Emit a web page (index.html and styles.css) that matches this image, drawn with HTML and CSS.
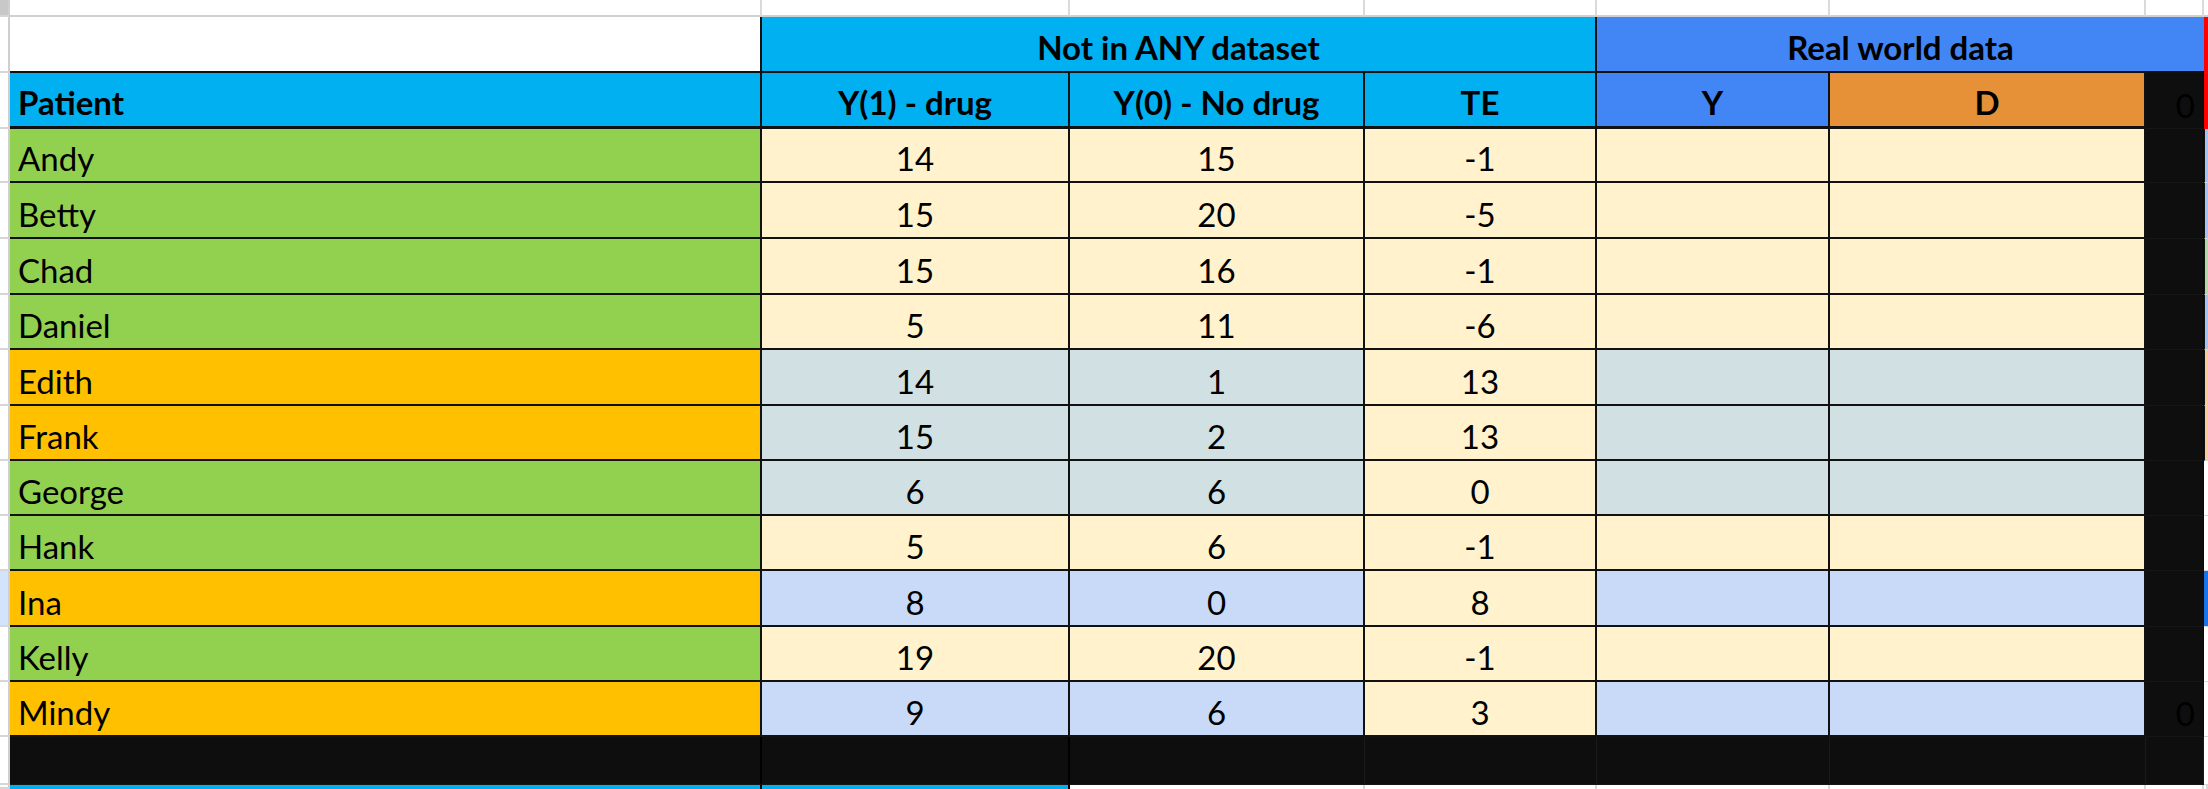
FILE: index.html
```html
<!DOCTYPE html>
<html>
<head>
<meta charset="utf-8">
<link rel="stylesheet" href="styles.css">
</head>
<body>
<div class="sheet">
  <!-- top partial row -->
  <div class="gut gut-top"></div>
  <div class="top"></div><div class="top"></div><div class="top"></div><div class="top"></div>
  <div class="top"></div><div class="top"></div><div class="top"></div><div class="top strip-top"></div>

  <!-- header row 1 -->
  <div class="gut"></div>
  <div class="cell blank"></div>
  <div class="cell head cyan span3">Not in ANY dataset</div>
  <div class="cell head blue span3 last">Real world data</div>
  <div class="strip red"></div>

  <!-- header row 2 -->
  <div class="gut"></div>
  <div class="cell head cyan left h2">Patient</div>
  <div class="cell head cyan h2">Y(1) - drug</div>
  <div class="cell head cyan h2">Y(0) - No drug</div>
  <div class="cell head cyan h2">TE</div>
  <div class="cell head blue h2">Y</div>
  <div class="cell head orange h2">D</div>
  <div class="cell dark num-r h2">0</div>
  <div class="strip red"></div>

  <!-- data -->
  <div class="gut"></div>
  <div class="cell name green">Andy</div>
  <div class="cell cream">14</div><div class="cell cream">15</div><div class="cell cream">-1</div>
  <div class="cell cream"></div><div class="cell cream"></div><div class="cell dark"></div>
  <div class="strip s-blue"></div>

  <div class="gut"></div>
  <div class="cell name green">Betty</div>
  <div class="cell cream">15</div><div class="cell cream">20</div><div class="cell cream">-5</div>
  <div class="cell cream"></div><div class="cell cream"></div><div class="cell dark"></div>
  <div class="strip s-blue"></div>

  <div class="gut"></div>
  <div class="cell name green">Chad</div>
  <div class="cell cream">15</div><div class="cell cream">16</div><div class="cell cream">-1</div>
  <div class="cell cream"></div><div class="cell cream"></div><div class="cell dark"></div>
  <div class="strip s-green"></div>

  <div class="gut"></div>
  <div class="cell name green">Daniel</div>
  <div class="cell cream">5</div><div class="cell cream">11</div><div class="cell cream">-6</div>
  <div class="cell cream"></div><div class="cell cream"></div><div class="cell dark"></div>
  <div class="strip s-blue"></div>

  <div class="gut"></div>
  <div class="cell name amber">Edith</div>
  <div class="cell slate">14</div><div class="cell slate">1</div><div class="cell cream">13</div>
  <div class="cell slate"></div><div class="cell slate"></div><div class="cell dark"></div>
  <div class="strip s-orange"></div>

  <div class="gut"></div>
  <div class="cell name amber">Frank</div>
  <div class="cell slate">15</div><div class="cell slate">2</div><div class="cell cream">13</div>
  <div class="cell slate"></div><div class="cell slate"></div><div class="cell dark"></div>
  <div class="strip s-orange"></div>

  <div class="gut"></div>
  <div class="cell name green">George</div>
  <div class="cell slate">6</div><div class="cell slate">6</div><div class="cell cream">0</div>
  <div class="cell slate"></div><div class="cell slate"></div><div class="cell dark"></div>
  <div class="strip s-white"></div>

  <div class="gut"></div>
  <div class="cell name green">Hank</div>
  <div class="cell cream">5</div><div class="cell cream">6</div><div class="cell cream">-1</div>
  <div class="cell cream"></div><div class="cell cream"></div><div class="cell dark"></div>
  <div class="strip s-white"></div>

  <div class="gut gut-sel"></div>
  <div class="cell name amber">Ina</div>
  <div class="cell lblue">8</div><div class="cell lblue">0</div><div class="cell cream">8</div>
  <div class="cell lblue"></div><div class="cell lblue"></div><div class="cell dark"></div>
  <div class="strip s-bright"></div>

  <div class="gut"></div>
  <div class="cell name green">Kelly</div>
  <div class="cell cream">19</div><div class="cell cream">20</div><div class="cell cream">-1</div>
  <div class="cell cream"></div><div class="cell cream"></div><div class="cell dark"></div>
  <div class="strip s-white"></div>

  <div class="gut"></div>
  <div class="cell name amber">Mindy</div>
  <div class="cell lblue">9</div><div class="cell lblue">6</div><div class="cell cream">3</div>
  <div class="cell lblue"></div><div class="cell lblue"></div><div class="cell dark num-r">0</div>
  <div class="strip s-white"></div>

  <!-- black row -->
  <div class="gut"></div>
  <div class="cell blackrow hard"></div>
  <div class="cell blackrow hard"></div>
  <div class="cell blackrow"></div>
  <div class="cell blackrow"></div>
  <div class="cell blackrow"></div>
  <div class="cell blackrow"></div>
  <div class="cell blackrow"></div>
  <div class="strip s-white"></div>

  <!-- bottom sliver -->
  <div class="gut"></div>
  <div class="bot cyan"></div>
  <div class="bot cyan"></div>
  <div class="bot"></div><div class="bot"></div><div class="bot"></div><div class="bot"></div><div class="bot"></div><div class="bot"></div>
</div>
</body>
</html>
```

FILE: styles.css
```css
html, body {
  margin: 0;
  padding: 0;
  background: #ffffff;
}

.sheet {
  display: grid;
  grid-template-columns: 10px 752px 308px 295px 232px 233px 316px 58px 4px;
  grid-template-rows: 17px 56px 56px 54px 56px 56px 55px 56px 55px 55px 55px 56px 55px 55px 48px 4px;
  width: 2208px;
  height: 789px;
  overflow: hidden;
  font-family: "Lato", "Liberation Sans", sans-serif;
  font-size: 33px;
  color: #000;
}

.sheet > div {
  box-sizing: border-box;
  min-width: 0;
  overflow: hidden;
}

.gut {
  background: #ffffff;
  border-right: 2px solid #cfcfcf;
  border-bottom: 2px solid #d6d6d6;
}
.gut-top { background: #c8c8c8; }
.gut-sel { background: #d3e3fd; }

.top {
  background: #ffffff;
  border-right: 2px solid #dadada;
  border-bottom: 2px solid #d0d0d0;
}

.cell {
  display: flex;
  align-items: flex-end;
  justify-content: center;
  line-height: 1;
  padding: 0 10px 6px 10px;
  border-right: 2px solid #111;
  border-bottom: 2px solid #111;
  white-space: nowrap;
}

.blank { background: #ffffff; }

.head { font-weight: 700; padding-bottom: 7px; }
.h2 { border-bottom-width: 3px; }
.left { justify-content: flex-start; padding-left: 8px; }
.name { justify-content: flex-start; padding-left: 8px; }
.span3 { grid-column: span 3; }
.last { border-right: none; }

.num-r { justify-content: flex-end; padding-right: 8px; }

.cyan { background: #00b0f0; }
.blue { background: #4285f4; }
.orange { background: #e69138; }
.green { background: #92d050; }
.amber { background: #ffc000; }
.cream { background: #fff2cc; }
.slate { background: #d0e0e3; }
.lblue { background: #c9daf8; }
.dark {
  background: #0e0e0e;
  border-right: 1px solid #080808;
  border-bottom: 1px solid #161616;
  color: #000;
}

.blackrow {
  background: #0e0e0e;
  border-right: 1px solid #1a1a1a;
  border-bottom: 1px solid #161616;
}
.blackrow.hard { border-right: 2px solid #000; }

.bot {
  background: #ffffff;
  border-right: 2px solid #dadada;
}
.bot.cyan { background: #00b0f0; border-right: 2px solid #000; }

.strip { background: #ffffff; border-bottom: 1px solid #d6d6d6; }
.strip-top { border-right: none; }
.red { background: #ff0000; border-bottom: none; }
.s-blue { background: #a4c2f4; border-left: 1px solid #111; }
.s-green { background: #b6d7a8; border-left: 1px solid #111; }
.s-orange { background: #f9cb9c; border-left: 1px solid #111; }
.s-white { background: #ffffff; }
.s-bright { background: #1a73e8; }
```
